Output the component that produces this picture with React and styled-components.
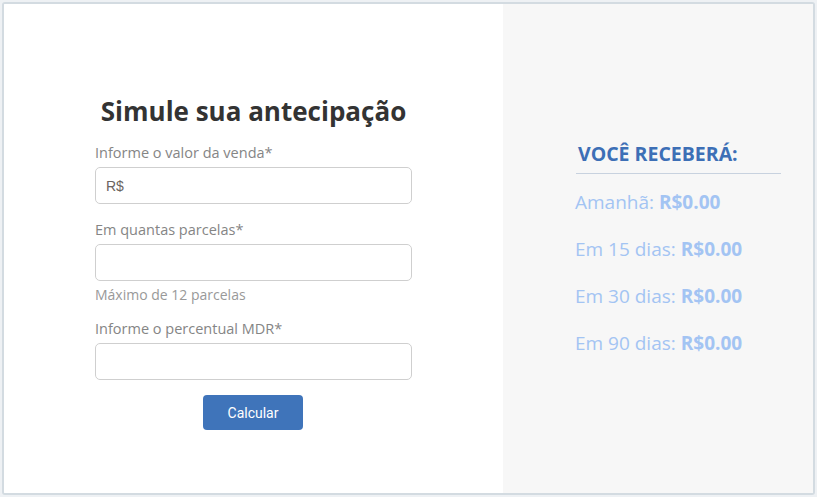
import React, { useState } from "react";
import styled, { createGlobalStyle } from "styled-components";

const GlobalStyle = createGlobalStyle`
  * {
    box-sizing: border-box;
  }
  body {
    margin: 0;
    background: #eef1f4;
    font-family: "Open Sans", "Noto Sans", sans-serif;
  }
`;

const Page = styled.main`
  padding: 2px;
  height: 497px;
`;

const Card = styled.div`
  display: flex;
  height: 493px;
  border: 2px solid #d3dbe1;
  border-radius: 3px;
  background: #ffffff;
  overflow: hidden;
`;

const FormSide = styled.section`
  width: 499px;
  background: #ffffff;
  display: flex;
  flex-direction: column;
  align-items: center;
  padding-top: 89px;
`;

const Title = styled.h1`
  margin: 0 0 14px;
  font-size: 26px;
  font-weight: 700;
  color: #333333;
  letter-spacing: 0;
`;

const Form = styled.form`
  width: 317px;
  display: flex;
  flex-direction: column;
`;

const Field = styled.div`
  display: flex;
  flex-direction: column;
  margin-bottom: ${(props) => props.$gap || "16px"};
`;

const Label = styled.label`
  font-size: 14.5px;
  color: #858585;
  line-height: 20px;
  margin-bottom: 4px;
`;

const Input = styled.input`
  height: 37px;
  width: 100%;
  border: 1px solid #cfcfcf;
  border-radius: 5px;
  padding: 0 10px;
  font-family: "Liberation Sans", Arial, sans-serif;
  font-size: 14px;
  color: #555555;
  outline: none;
  &::placeholder {
    color: #6b6460;
  }
`;

const Hint = styled.span`
  font-size: 14px;
  color: #999999;
  line-height: 20px;
  margin-top: 4px;
`;

const Button = styled.button`
  align-self: center;
  width: 100px;
  height: 35px;
  margin: -1px 1px 0 0;
  border: none;
  border-radius: 4px;
  background: #3f74ba;
  color: #ffffff;
  font-family: Roboto, "Liberation Sans", sans-serif;
  font-size: 14px;
  cursor: pointer;
`;

const ResultSide = styled.aside`
  flex: 1;
  background: #f7f7f7;
  display: flex;
  flex-direction: column;
  justify-content: center;
  padding: 0 32px 0 72px;
`;

const ResultTitle = styled.h2`
  margin: 0 0 0 3px;
  font-size: 19.5px;
  font-weight: 700;
  color: #3d6fb6;
  line-height: 24px;
`;

const Divider = styled.hr`
  margin: 7px 0 15px 1px;
  border: none;
  border-top: 1px solid #c8d2df;
`;

const ResultRow = styled.p`
  margin: 0 0 ${(props) => (props.$last ? "0" : "21px")};
  font-size: 19px;
  color: #a3c4f3;
  line-height: 26px;
  strong {
    font-weight: 700;
  }
`;

const results = [
  { label: "Amanhã:", value: "R$0.00" },
  { label: "Em 15 dias:", value: "R$0.00" },
  { label: "Em 30 dias:", value: "R$0.00" },
  { label: "Em 90 dias:", value: "R$0.00" },
];

function App() {
  const [amount, setAmount] = useState("");
  const [installments, setInstallments] = useState("");
  const [mdr, setMdr] = useState("");

  return (
    <Page>
      <GlobalStyle />
      <Card>
        <FormSide>
          <Title>Simule sua antecipação</Title>
          <Form onSubmit={(e) => e.preventDefault()}>
            <Field>
              <Label>Informe o valor da venda*</Label>
              <Input
                placeholder="R$"
                value={amount}
                onChange={(e) => setAmount(e.target.value)}
              />
            </Field>
            <Field $gap="14px">
              <Label>Em quantas parcelas*</Label>
              <Input
                value={installments}
                onChange={(e) => setInstallments(e.target.value)}
              />
              <Hint>Máximo de 12 parcelas</Hint>
            </Field>
            <Field>
              <Label>Informe o percentual MDR*</Label>
              <Input value={mdr} onChange={(e) => setMdr(e.target.value)} />
            </Field>
            <Button type="submit">Calcular</Button>
          </Form>
        </FormSide>
        <ResultSide>
          <ResultTitle>VOCÊ RECEBERÁ:</ResultTitle>
          <Divider />
          {results.map((r, i) => (
            <ResultRow key={r.label} $last={i === results.length - 1}>
              {r.label} <strong>{r.value}</strong>
            </ResultRow>
          ))}
        </ResultSide>
      </Card>
    </Page>
  );
}

export default App;
